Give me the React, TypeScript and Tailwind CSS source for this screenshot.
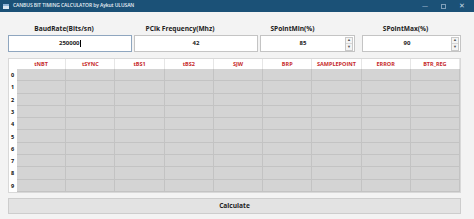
import React from "react";

const columns = ["tNBT", "tSYNC", "tBS1", "tBS2", "SJW", "BRP", "SAMPLEPOINT", "ERROR", "BTR_REG"];
const rows = [0, 1, 2, 3, 4, 5, 6, 7, 8, 9];

function Spinner() {
  return (
    <div className="flex flex-col w-[8px] h-[14px] border border-[#c9c9c9] bg-[#f4f4f4] mr-[1px]">
      <span className="flex-1 flex items-center justify-center text-[4px] leading-none text-[#555] border-b border-[#d6d6d6]">▲</span>
      <span className="flex-1 flex items-center justify-center text-[4px] leading-none text-[#555]">▼</span>
    </div>
  );
}

function Field({
  label,
  value,
  width,
  labelPad,
  spin,
  focused,
}: {
  label: string;
  value: string;
  width: string;
  labelPad: string;
  spin?: boolean;
  focused?: boolean;
}) {
  return (
    <div className={`flex flex-col ${width}`}>
      <div className={`h-[11px] flex items-center justify-center text-[6.6px] font-bold text-[#222] ${labelPad}`}>{label}</div>
      <div
        className={`mt-[1px] h-[17px] flex items-center bg-white border ${
          focused ? "border-[#8fa6bf]" : "border-[#c4c4c4]"
        }`}
      >
        <div className="flex-1 text-center text-[6px] font-bold text-[#222]">
          {value}
          {focused && <span className="inline-block w-[1px] h-[7px] bg-black align-middle ml-[0.5px]" />}
        </div>
        {spin && <Spinner />}
      </div>
    </div>
  );
}

export default function App() {
  return (
    <div className="w-[474px] h-[219px] bg-[#f3f3f3] flex flex-col overflow-hidden" style={{ fontFamily: '"Open Sans", "Noto Sans", sans-serif' }}>
      {/* title bar */}
      <div className="h-[12px] bg-[#1b5177] flex items-center px-[3px] text-white">
        <div className="w-[6px] h-[5px] bg-[#dbe7f2] border-t-[2px] border-[#8fb3d6] mr-[4px]" />
        <span className="text-[5px] font-semibold tracking-[-0.1px] text-[#e8f0f6]">CANBUS BIT TIMING CALCULATOR by Aykut ULUSAN</span>
        <div className="ml-auto flex items-center gap-[13px] text-[#c6d7e5] text-[6px] pr-[6px]">
          <span>—</span>
          <span className="w-[5px] h-[5px] border border-[#7f9fb9]" />
          <span className="text-[7px]">✕</span>
        </div>
      </div>

      <div className="flex flex-col pl-[8px] pr-[13px] pt-[11px]">
        <div className="flex">
          <Field label="BaudRate(Bits/sn)" value="250000" width="w-[124px]" labelPad="pr-[12px]" focused />
          <div className="w-[2px]" />
          <Field label="PClk Frequency(Mhz)" value="42" width="w-[124px]" labelPad="pr-[32px]" />
          <div className="w-[2px]" />
          <Field label="SPointMin(%)" value="85" width="w-[95px]" labelPad="pr-[30px]" spin />
          <div className="w-[7px]" />
          <Field label="SPointMax(%)" value="90" width="w-[99px]" labelPad="pr-[12px]" spin />
        </div>

        {/* grid */}
        <div className="mt-[6px] border border-[#d8d8d8] bg-white flex flex-col">
          <div className="flex h-[10px]">
            <div className="w-[8px]" />
            {columns.map((c) => (
              <div key={c} className="flex-1 flex items-center justify-center text-[5.5px] font-bold text-[#c62a2a] border-r border-[#e6e6e6]">
                {c}
              </div>
            ))}
          </div>
          {rows.map((r) => (
            <div key={r} className="flex h-[12.3px]">
              <div className="w-[8px] flex items-center pl-[2px] text-[5.5px] font-bold text-[#111]">{r}</div>
              {columns.map((c) => (
                <div key={c} className="flex-1 bg-[#d4d4d4] border-r border-b border-[#c3c3c3]" />
              ))}
            </div>
          ))}
        </div>

        {/* button */}
        <button className="mt-[5px] h-[16px] bg-[#e3e3e3] border border-[#cdcdcd] flex items-center justify-center text-[6.6px] font-bold text-[#222]">
          Calculate
        </button>
      </div>
    </div>
  );
}
